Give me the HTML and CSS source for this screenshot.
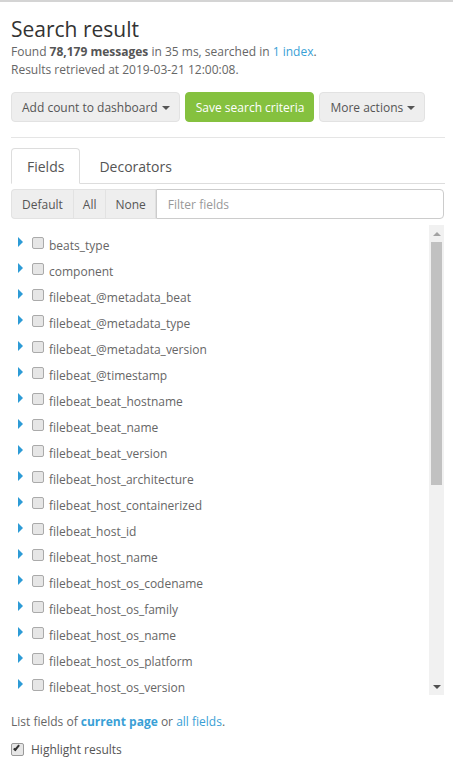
FILE: index.html
```html
<!DOCTYPE html>
<html lang="en">
	<head>
		<meta charset="utf-8">
		<link rel="stylesheet" href="styles.css">
	</head>
	<body>
		<div class="sidebar">
			<h1 class="title">Search result</h1>
			<p class="summary">Found <b>78,179 messages</b> in 35 ms, searched in <a href="#">1 index</a>.<br>Results retrieved at 2019-03-21 12:00:08.</p>

			<div class="actions">
				<button class="btn">Add count to dashboard <span class="caret"></span></button>
				<button class="btn btn-success">Save search criteria</button>
				<button class="btn">More actions <span class="caret"></span></button>
			</div>

			<hr>

			<ul class="tabs">
				<li class="active">Fields</li>
				<li>Decorators</li>
			</ul>

			<div class="filter">
				<div class="btn-group">
					<button class="btn btn-sm">Default</button>
					<button class="btn btn-sm">All</button>
					<button class="btn btn-sm">None</button>
				</div>
				<input class="filter-input" type="text" placeholder="Filter fields">
			</div>

			<div class="field-box">
				<ul class="fields" id="fields"></ul>
				<div class="scrollbar">
					<span class="arrow up"></span>
					<div class="track"><div class="thumb"></div></div>
					<span class="arrow down"></span>
				</div>
			</div>

			<p class="list-note">List fields of <a class="strong" href="#">current page</a> or <a href="#">all fields</a>.</p>
			<label class="highlight"><span class="check on"></span>Highlight results</label>
		</div>

		<script>
			var names = ["beats_type", "component", "filebeat_@metadata_beat", "filebeat_@metadata_type",
				"filebeat_@metadata_version", "filebeat_@timestamp", "filebeat_beat_hostname",
				"filebeat_beat_name", "filebeat_beat_version", "filebeat_host_architecture",
				"filebeat_host_containerized", "filebeat_host_id", "filebeat_host_name",
				"filebeat_host_os_codename", "filebeat_host_os_family", "filebeat_host_os_name",
				"filebeat_host_os_platform", "filebeat_host_os_version"];
			var str = "";
			for (var i = 0; i < names.length; i++) {
				str += '<li><span class="tri"></span><span class="check"></span>' + names[i] + '</li>';
			}
			document.getElementById("fields").innerHTML = str;
		</script>
	</body>
</html>
```

FILE: styles.css
```css
*, *::before, *::after {
	margin: 0;
	padding: 0;
	box-sizing: border-box;
}
body {
	background-color: #fff;
	font-family: "Open Sans", "Liberation Sans", sans-serif;
	font-size: 12px;
	color: #666;
	border-top: 2px solid #d4d4d4;
}
a {
	color: #3a9fd6;
	text-decoration: none;
}
a.strong {
	font-weight: bold;
}
.sidebar {
	padding: 0 8px 0 11px;
}
.title {
	font-size: 21px;
	font-weight: normal;
	color: #333;
	line-height: 26px;
	margin-top: 14px;
}
.summary {
	line-height: 18px;
	margin-top: 1px;
}
.summary b {
	color: #555;
}
.actions {
	display: flex;
	gap: 5px;
	margin-top: 13px;
}
.btn {
	font-family: inherit;
	font-size: 12px;
	color: #555;
	background-color: #eee;
	border: 1px solid #e2e2e2;
	border-radius: 4px;
	height: 30px;
	padding: 0 10px;
	cursor: pointer;
}
.actions .btn {
	padding: 0 9px 0 10px;
}
.btn-success {
	background-color: #85c13f;
	border-color: #85c13f;
	color: #fff;
}
.caret {
	display: inline-block;
	width: 0;
	height: 0;
	border-top: 4px solid #555;
	border-left: 4px solid transparent;
	border-right: 4px solid transparent;
	vertical-align: middle;
	margin-left: 1px;
}
hr {
	border: 0;
	border-top: 1px solid #e5e5e5;
	margin: 15px 0 10px;
}
.tabs {
	list-style: none;
	display: flex;
	border-bottom: 1px solid #ddd;
	font-size: 14px;
	color: #555;
}
.tabs li {
	height: 36px;
	line-height: 36px;
	padding: 0 16px;
	margin-bottom: -1px;
	border: 1px solid transparent;
	border-radius: 4px 4px 0 0;
	margin-right: 2px;
}
.tabs li.active {
	border-color: #ddd;
	border-bottom-color: #fff;
	background-color: #fff;
	padding: 0 15px;
}
.filter {
	display: flex;
	margin-top: 5px;
	height: 30px;
}
.btn-group {
	display: flex;
}
.btn-sm {
	height: 30px;
	padding: 0 10px;
	border-radius: 0;
	border-right-color: #e0e0e0;
}
.btn-group .btn-sm:first-child {
	border-radius: 4px 0 0 4px;
}
.btn-group .btn-sm + .btn-sm {
	margin-left: -1px;
	padding: 0 9px;
}
.filter-input {
	flex: 1;
	height: 30px;
	border: 1px solid #ccc;
	border-radius: 0 4px 4px 0;
	font-family: inherit;
	font-size: 12px;
	padding: 0 11px;
	color: #555;
	outline: none;
	margin-right: 1px;
}
.filter-input::placeholder {
	color: #999;
}
.field-box {
	display: flex;
	height: 470px;
	margin-top: 6px;
}
.fields {
	flex: 1;
	list-style: none;
	overflow: hidden;
	padding-top: 7px;
}
.fields li {
	height: 26px;
	display: flex;
	align-items: center;
	font-size: 12px;
	color: #666;
}
.tri {
	width: 0;
	height: 0;
	border-left: 5px solid #2d9bd6;
	border-top: 5px solid transparent;
	border-bottom: 5px solid transparent;
	margin: 0 9px 0 7px;
	position: relative;
	top: -3px;
}
.check {
	display: inline-block;
	width: 12px;
	height: 12px;
	border: 1px solid #aaa;
	border-radius: 2px;
	background-color: #e6e6e6;
	margin-right: 5px;
	position: relative;
	top: -2px;
}
.check.on::after {
	content: "";
	position: absolute;
	left: 3px;
	top: 0;
	width: 3px;
	height: 7px;
	border: solid #333;
	border-width: 0 2px 2px 0;
	transform: rotate(40deg);
}
.scrollbar {
	width: 15px;
	margin-right: 1px;
	background-color: #f1f1f1;
	display: flex;
	flex-direction: column;
}
.arrow {
	height: 17px;
	display: flex;
	align-items: center;
	justify-content: center;
}
.arrow::before {
	content: "";
	border-left: 4px solid transparent;
	border-right: 4px solid transparent;
}
.arrow.up::before {
	border-bottom: 4px solid #a3a3a3;
}
.arrow.down::before {
	border-top: 4px solid #505050;
}
.track {
	flex: 1;
	padding: 0 2px;
}
.thumb {
	height: 243px;
	background-color: #c1c1c1;
}
.list-note {
	margin-top: 18px;
	line-height: 18px;
}
.highlight {
	display: flex;
	align-items: center;
	margin-top: 10px;
	font-size: 12px;
	color: #555;
}
.highlight .check {
	top: 0;
	width: 13px;
	height: 13px;
	margin-right: 7px;
	border-color: #999;
}
```
